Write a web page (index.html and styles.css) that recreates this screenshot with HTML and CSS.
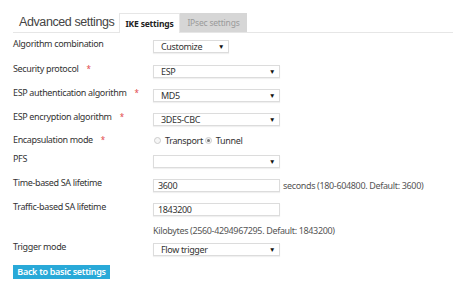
FILE: index.html
```html
<!DOCTYPE html>
<html>
<head>
<meta charset="utf-8">
<link rel="stylesheet" href="styles.css">
</head>
<body>
<div class="page">
  <div class="header">
    <div class="title">Advanced settings</div>
    <div class="tab tab-active">IKE settings</div>
    <div class="tab tab-inactive">IPsec settings</div>
  </div>
  <div class="form">
    <div class="row r25">
      <div class="label">Algorithm combination</div>
      <div class="select short"><span>Customize</span><i class="arrow">▼</i></div>
    </div>
    <div class="row r24">
      <div class="label">Security protocol<span class="req">*</span></div>
      <div class="select"><span>ESP</span><i class="arrow">▼</i></div>
    </div>
    <div class="row r24">
      <div class="label">ESP authentication algorithm<span class="req">*</span></div>
      <div class="select"><span>MD5</span><i class="arrow">▼</i></div>
    </div>
    <div class="row r21">
      <div class="label">ESP encryption algorithm<span class="req">*</span></div>
      <div class="select"><span>3DES-CBC</span><i class="arrow">▼</i></div>
    </div>
    <div class="row r21">
      <div class="label label-plain">Encapsulation mode<span class="req">*</span></div>
      <div class="radios">
        <span class="radio"></span><span class="rtext">Transport</span>
        <span class="radio checked"></span><span class="rtext">Tunnel</span>
      </div>
    </div>
    <div class="row r24">
      <div class="label">PFS</div>
      <div class="select"><span></span><i class="arrow">▼</i></div>
    </div>
    <div class="row r24">
      <div class="label">Time-based SA lifetime</div>
      <div class="input">3600</div>
      <div class="hint">seconds (180-604800. Default: 3600)</div>
    </div>
    <div class="row r22">
      <div class="label">Traffic-based SA lifetime</div>
      <div class="input">1843200</div>
    </div>
    <div class="row r18">
      <div class="label"></div>
      <div class="hint hint-line">Kilobytes (2560-4294967295. Default: 1843200)</div>
    </div>
    <div class="row r22">
      <div class="label">Trigger mode</div>
      <div class="select"><span>Flow trigger</span><i class="arrow">▼</i></div>
    </div>
    <div class="actions">
      <button class="btn">Back to basic settings</button>
    </div>
  </div>
</div>
</body>
</html>
```
FILE: styles.css
```css
html, body {
  margin: 0;
  padding: 0;
  background: #ffffff;
}
.page {
  padding: 13px 0 0 13px;
  width: 440px;
  font-family: "Noto Sans", "Open Sans", sans-serif;
  font-size: 9px;
  letter-spacing: -0.35px;
  color: #333333;
}
.header {
  display: flex;
  align-items: flex-end;
  height: 19px;
  border-bottom: 1px solid #e6e6e6;
}
.title {
  width: 100px;
  padding-left: 6px;
  height: 19px;
  line-height: 18px;
  font-family: "Liberation Sans", Arial, sans-serif;
  font-size: 12.5px;
  letter-spacing: -0.4px;
  color: #444444;
}
.tab {
  height: 19px;
  line-height: 20px;
  text-align: center;
  font-size: 8.5px;
  box-sizing: border-box;
  letter-spacing: -0.2px;
}
.tab-active {
  width: 61px;
  background: #ffffff;
  border: 1px solid #e6e6e6;
  border-bottom: none;
  font-weight: bold;
  color: #222222;
  margin-bottom: -1px;
  height: 20px;
}
.tab-inactive {
  width: 67px;
  background: #d6d6d6;
  color: #9a9a9a;
}
.form {
  padding-top: 7px;
}
.row {
  display: flex;
  align-items: flex-start;
}
.r25 { height: 25px; }
.r24 { height: 24px; }
.r22 { height: 22px; }
.r21 { height: 21px; }
.r18 { height: 18px; }
.label {
  width: 140px;
  flex: none;
  line-height: 12px;
  margin-top: -2px;
  white-space: nowrap;
}
.label-plain {
  margin-top: 0;
}
.req {
  color: #e2474b;
  margin-left: 8px;
  font-size: 8px;
}
.select, .input {
  box-sizing: border-box;
  width: 127px;
  height: 13px;
  border: 1px solid #dcdcdc;
  box-shadow: 0 1px 1px rgba(0, 0, 0, 0.06);
  display: flex;
  align-items: center;
  justify-content: space-between;
  padding: 0 4px 0 7px;
  line-height: 11px;
  color: #333333;
  background: #ffffff;
}
.input {
  padding-left: 4px;
  justify-content: flex-start;
}
.select.short {
  width: 76px;
}
.arrow {
  font-style: normal;
  font-size: 6.5px;
  color: #111111;
  line-height: 11px;
}
.radios {
  display: flex;
  align-items: center;
  height: 12px;
  color: #333333;
}
.radio {
  width: 5px;
  height: 5px;
  border-radius: 50%;
  border: 1px solid #cccccc;
  background: #f6f6f6;
  margin: 0 4px 0 1px;
  position: relative;
}
.radio.checked::after {
  content: "";
  position: absolute;
  left: 1px;
  top: 1px;
  width: 3px;
  height: 3px;
  border-radius: 50%;
  background: #777777;
}
.rtext {
  margin-right: 1px;
}
.hint {
  margin-left: 3px;
  line-height: 13px;
  color: #555555;
  white-space: nowrap;
}
.hint-line {
  margin-left: 0;
  line-height: 12px;
}
.actions {
  display: flex;
}
.btn {
  width: 97px;
  height: 14px;
  padding: 0;
  border: none;
  background: #29a9d8;
  color: #ffffff;
  font-family: "Noto Sans", "Open Sans", sans-serif;
  font-size: 9px;
  font-weight: 600;
  letter-spacing: -0.3px;
  line-height: 14px;
  text-align: center;
  white-space: nowrap;
}
```
